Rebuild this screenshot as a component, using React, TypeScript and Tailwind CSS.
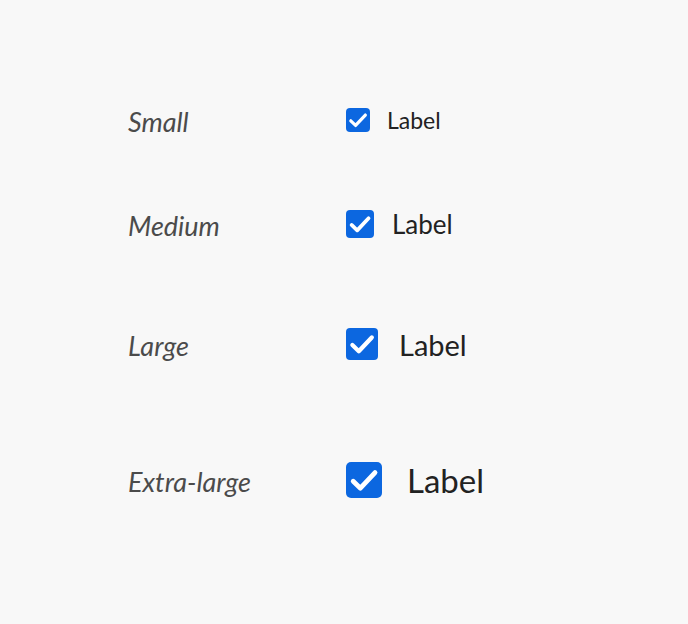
const sizes = [
  { name: "Small", box: "w-6 h-6 rounded-[4px]", label: "text-[23px] ml-[17px]", row: "h-6 mt-[108px]" },
  { name: "Medium", box: "w-7 h-7 rounded-[4px]", label: "text-[26px] ml-[18px]", row: "h-7 mt-[78px]" },
  { name: "Large", box: "w-8 h-8 rounded-[4px]", label: "text-[29px] ml-[21px]", row: "h-8 mt-[90px]" },
  { name: "Extra-large", box: "w-9 h-9 rounded-[5px]", label: "text-[33px] ml-[25px]", row: "h-9 mt-[102px]" },
];

function CheckIcon() {
  return (
    <svg viewBox="0 0 18 18" className="w-full h-full" fill="none">
      <path
        d="M3.6 9.6 L7.2 13.1 L14.5 5.3"
        stroke="white"
        strokeWidth="2.4"
        strokeLinecap="round"
        strokeLinejoin="round"
      />
    </svg>
  );
}

export default function App() {
  return (
    <div className="w-[688px] h-[624px] flex flex-col bg-[#f8f8f8] font-['Lato',sans-serif] overflow-hidden">
      {sizes.map((s) => (
        <div key={s.name} className={`flex items-center shrink-0 ${s.row}`}>
          <div className="w-[346px] pl-[128px] italic text-[27px] leading-none text-[#4b4b4b] translate-y-[1px]">
            {s.name}
          </div>
          <div className={`shrink-0 bg-[#0c67e0] ${s.box}`}>
            <CheckIcon />
          </div>
          <span className={`leading-none text-[#222] ${s.label}`}>Label</span>
        </div>
      ))}
    </div>
  );
}
